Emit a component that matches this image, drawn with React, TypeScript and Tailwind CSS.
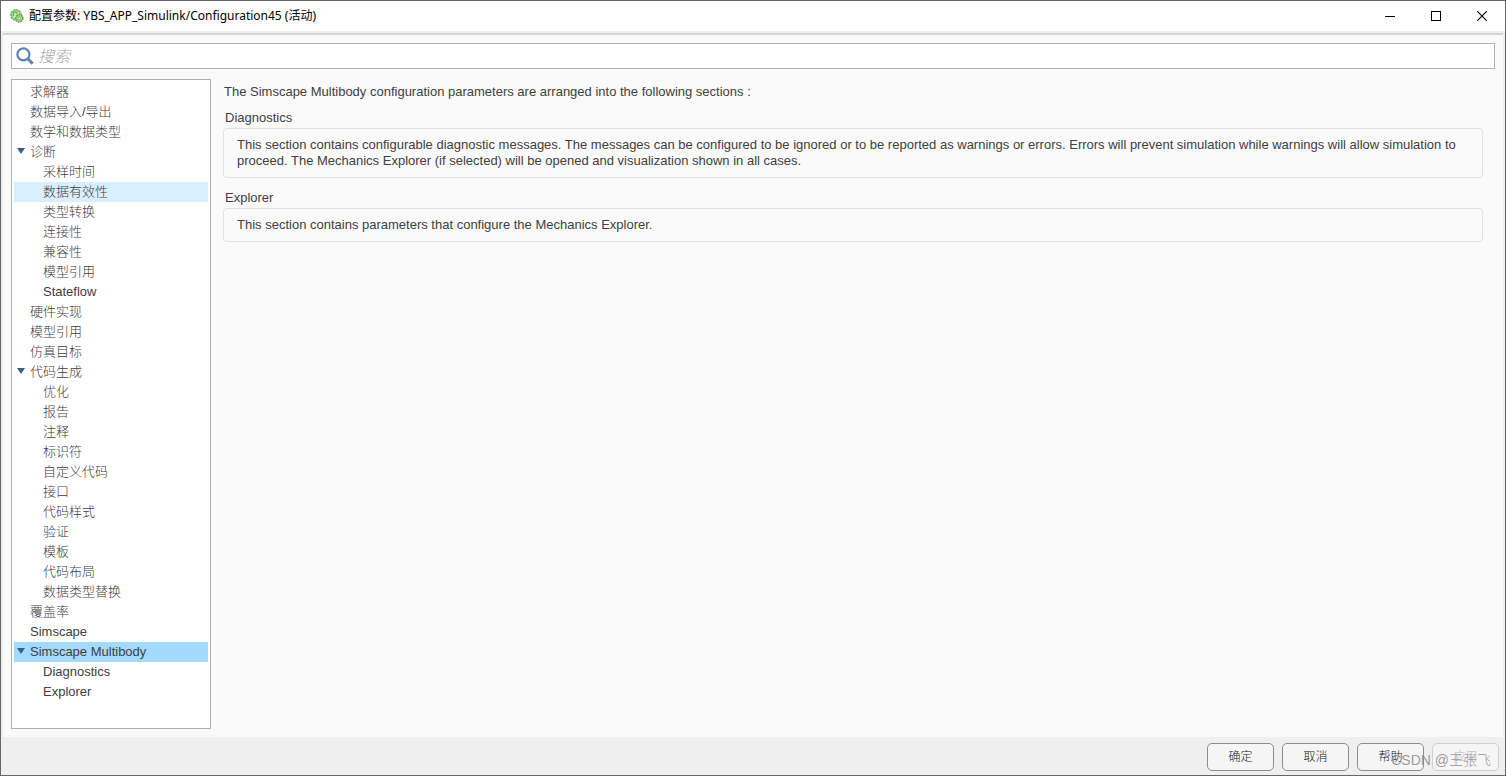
import React, { useState } from 'react';

type TreeItem = { id: string; label: string; child?: boolean; open?: boolean };

const items: TreeItem[] = [
  { id: 'solver', label: '求解器' },
  { id: 'io', label: '数据导入/导出' },
  { id: 'math', label: '数学和数据类型' },
  { id: 'diag', label: '诊断', open: true },
  { id: 'diag-time', label: '采样时间', child: true },
  { id: 'diag-data', label: '数据有效性', child: true },
  { id: 'diag-type', label: '类型转换', child: true },
  { id: 'diag-conn', label: '连接性', child: true },
  { id: 'diag-compat', label: '兼容性', child: true },
  { id: 'diag-ref', label: '模型引用', child: true },
  { id: 'diag-sf', label: 'Stateflow', child: true },
  { id: 'hw', label: '硬件实现' },
  { id: 'ref', label: '模型引用' },
  { id: 'target', label: '仿真目标' },
  { id: 'code', label: '代码生成', open: true },
  { id: 'code-opt', label: '优化', child: true },
  { id: 'code-report', label: '报告', child: true },
  { id: 'code-comment', label: '注释', child: true },
  { id: 'code-ident', label: '标识符', child: true },
  { id: 'code-custom', label: '自定义代码', child: true },
  { id: 'code-iface', label: '接口', child: true },
  { id: 'code-style', label: '代码样式', child: true },
  { id: 'code-verify', label: '验证', child: true },
  { id: 'code-tpl', label: '模板', child: true },
  { id: 'code-place', label: '代码布局', child: true },
  { id: 'code-replace', label: '数据类型替换', child: true },
  { id: 'cov', label: '覆盖率' },
  { id: 'simscape', label: 'Simscape' },
  { id: 'multibody', label: 'Simscape Multibody', open: true },
  { id: 'mb-diag', label: 'Diagnostics', child: true },
  { id: 'mb-explorer', label: 'Explorer', child: true },
];

function AppIcon() {
  return (
    <svg width="16" height="16" viewBox="0 0 16 16" aria-hidden="true">
      <circle cx="7" cy="7" r="5.2" fill="#c5e6b4" stroke="#8cc47a" strokeWidth="2" strokeDasharray="2.2 0.8" />
      <circle cx="7" cy="7" r="4.4" fill="#cfeac2" stroke="#6fb35e" strokeWidth="1" />
      <path d="M5 8a2.2 2.2 0 1 1 3.6-2.2" fill="none" stroke="#5fa94e" strokeWidth="1.2" />
      <circle cx="10.3" cy="10.3" r="3.6" fill="#a5d68c" stroke="#5fa94e" strokeWidth="1.5" strokeDasharray="2 0.6" />
      <circle cx="10.3" cy="10.3" r="1.4" fill="#eef8e9" stroke="#5fae4c" strokeWidth="0.8" />
    </svg>
  );
}

function Section({ title, children }: { title: string; children: React.ReactNode }) {
  return (
    <section className="mb-3">
      <h2 className="px-0.5 mb-0.5 leading-4">{title}</h2>
      <p className="border border-[#e1e1e1] rounded px-[13px] py-2 leading-4">{children}</p>
    </section>
  );
}

const buttonClass = "w-[67px] h-7 rounded-[5px] border text-xs bg-[#f5f5f5] flex items-center justify-center";

export default function App() {
  const [selected, setSelected] = useState('multibody');

  return (
    <div className="relative min-h-screen flex flex-col border border-[#666666] bg-[#efefef] text-[13px] font-light text-[#404040] font-['Liberation_Sans','Noto_Sans_CJK_SC',sans-serif]">
      {/* Title bar */}
      <header className="h-[30px] bg-white flex items-center justify-between pl-2 text-black">
        <div className="flex items-center gap-1">
          <AppIcon />
          <h1 className="text-xs font-normal font-['Noto_Sans','Noto_Sans_CJK_SC',sans-serif]">配置参数: YBS_APP_Simulink/Configuration45 (活动)</h1>
        </div>
        <div className="flex h-full">
          <button aria-label="Minimize" className="w-[46px] h-full flex items-center justify-center">
            <svg width="10" height="11" viewBox="0 0 10 11" shapeRendering="crispEdges"><path d="M0 5.5h10" stroke="#000" /></svg>
          </button>
          <button aria-label="Maximize" className="w-[46px] h-full flex items-center justify-center">
            <svg width="10" height="10" viewBox="0 0 10 10" shapeRendering="crispEdges"><path d="M.5 .5h9v9h-9z" fill="none" stroke="#000" /></svg>
          </button>
          <button aria-label="Close" className="w-[46px] h-full flex items-center justify-center">
            <svg width="10" height="10" viewBox="0 0 10 10"><path d="M.3 .3l9.4 9.4M9.7 .3l-9.4 9.4" stroke="#000" strokeWidth="1.1" /></svg>
          </button>
        </div>
      </header>

      <div className="flex-1 flex flex-col mx-0.5 mt-0.5 border-t-2 border-[#d3d3d3] bg-[#fafafa] px-2 py-2">
        <label className="h-[26px] border border-[#b0b0b0] bg-white flex items-center px-1 gap-1 mb-2.5">
          <svg width="18" height="18" viewBox="0 0 18 18" fill="none" stroke="#5b84b1" aria-hidden="true">
            <circle cx="7.4" cy="7.4" r="6" strokeWidth="2.2" />
            <path d="M11.8 11.8l4.8 4.8" strokeWidth="3" />
          </svg>
          <input aria-label="搜索" placeholder="搜索" className="flex-1 h-full pt-0.5 outline-none text-base italic placeholder:text-[#a6a6a6]" />
        </label>

        <div className="flex-1 flex">
          <nav className="w-[200px] shrink-0 border border-[#b0b0b0] bg-white p-0.5">
            <ul>
              {items.map((item) => (
                <li key={item.id}>
                  <button
                    onClick={() => setSelected(item.id)}
                    className={`w-full h-5 flex items-center text-left ${
                      selected === item.id ? 'bg-[#a2d9ff]' : item.id === 'diag-data' ? 'bg-[#d8efff]' : 'hover:bg-[#d8efff]'
                    }`}
                  >
                    <span className={`shrink-0 flex items-center pl-[3px] ${item.child ? 'w-[29px]' : 'w-4'}`}>
                      {item.open && (
                        <svg width="8" height="8" viewBox="0 0 8 8" aria-hidden="true"><path d="M0 0h8L4 6z" fill="#34618c" /></svg>
                      )}
                    </span>
                    {item.label}
                  </button>
                </li>
              ))}
            </ul>
          </nav>

          <main className="flex-1 px-3 pt-[5px]">
            <p className="leading-4 mb-2.5 px-px">The Simscape Multibody configuration parameters are arranged into the following sections :</p>
            <Section title="Diagnostics">
              This section contains configurable diagnostic messages. The messages can be configured to be ignored or to be reported as warnings or errors. Errors will prevent simulation while warnings will allow simulation to proceed. The Mechanics Explorer (if selected) will be opened and visualization shown in all cases.
            </Section>
            <Section title="Explorer">This section contains parameters that configure the Mechanics Explorer.</Section>
          </main>
        </div>
      </div>

      {/* Dialog buttons */}
      <footer className="h-[38px] flex items-end justify-end gap-2 pr-1.5 pb-1">
        <button className={`${buttonClass} border-[#8c8c8c] text-[#202020]`}>确定</button>
        <button className={`${buttonClass} border-[#8c8c8c] text-[#202020]`}>取消</button>
        <button className={`${buttonClass} border-[#8c8c8c] text-[#202020]`}>帮助</button>
        <button disabled className={`${buttonClass} border-[#d0d0d0] text-[#b8b8b8]`}>应用</button>
      </footer>
      <span className="absolute right-3.5 bottom-[5px] text-sm leading-5 text-[#8f8f8f]/90 pointer-events-none">CSDN @王张飞</span>
    </div>
  );
}
